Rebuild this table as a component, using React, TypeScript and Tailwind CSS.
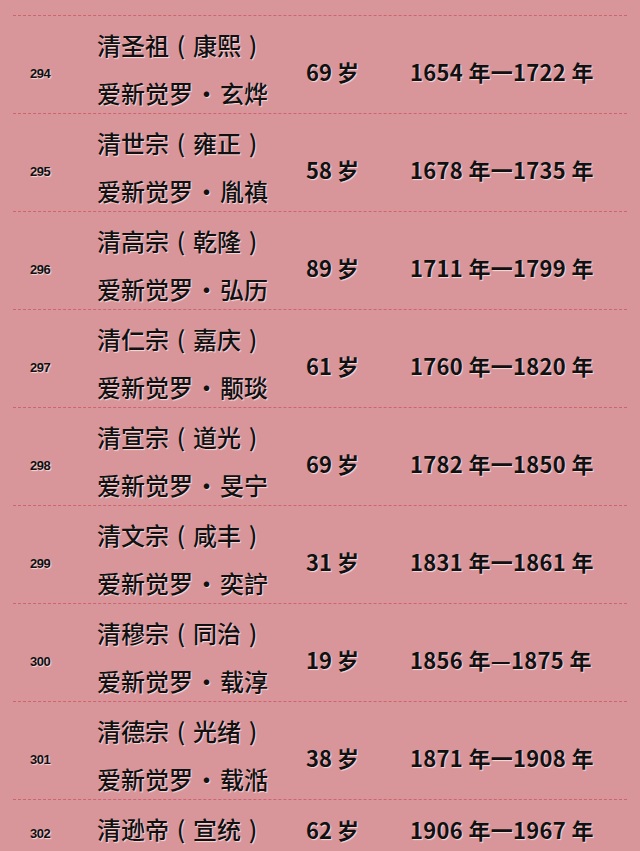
import React from "react";

const rows = [
  { no: "294", title: ["清圣祖", "康熙"], name: ["爱新觉罗", "玄烨"], age: "69 岁", years: "1654 年一1722 年" },
  { no: "295", title: ["清世宗", "雍正"], name: ["爱新觉罗", "胤禛"], age: "58 岁", years: "1678 年一1735 年" },
  { no: "296", title: ["清高宗", "乾隆"], name: ["爱新觉罗", "弘历"], age: "89 岁", years: "1711 年一1799 年" },
  { no: "297", title: ["清仁宗", "嘉庆"], name: ["爱新觉罗", "颙琰"], age: "61 岁", years: "1760 年一1820 年" },
  { no: "298", title: ["清宣宗", "道光"], name: ["爱新觉罗", "旻宁"], age: "69 岁", years: "1782 年一1850 年" },
  { no: "299", title: ["清文宗", "咸丰"], name: ["爱新觉罗", "奕詝"], age: "31 岁", years: "1831 年一1861 年" },
  { no: "300", title: ["清穆宗", "同治"], name: ["爱新觉罗", "载淳"], age: "19 岁", years: "1856 年—1875 年" },
  { no: "301", title: ["清德宗", "光绪"], name: ["爱新觉罗", "载湉"], age: "38 岁", years: "1871 年一1908 年" },
  // last row is cut off by the bottom edge, only its first line shows
  { no: "302", title: ["清逊帝", "宣统"], name: null, age: "62 岁", years: "1906 年一1967 年" },
];

const shadow = "[text-shadow:1px_1px_1px_rgba(255,236,236,0.8)]";

function Box({ children, w = "w-[24px]" }: { children: React.ReactNode; w?: string }) {
  return <span className={`inline-block ${w} text-center`}>{children}</span>;
}

export default function App() {
  return (
    <div
      className="w-[640px] h-[851px] overflow-hidden bg-[#d9969a] pt-[15px] text-[#111]"
      style={{ fontFamily: '"Noto Sans CJK SC", "Noto Sans", sans-serif' }}
    >
      {rows.map((r, i) => {
        const last = i === rows.length - 1;
        return (
          <div
            key={r.no}
            className="mx-[13px] h-[98px] border-t border-dashed border-[#cf6470] flex"
          >
            <div
              className={`w-[84px] pl-[17px] ${last ? "pt-[26px]" : "pt-[50px]"} text-[13px] leading-[16px] font-bold tracking-[-0.5px]`}
              style={{ fontFamily: '"Liberation Sans", Arial, sans-serif' }}
            >
              <span className={shadow}>{r.no}</span>
            </div>
            <div className={`w-[209px] pt-[5px] text-[24px] leading-[48px] font-medium whitespace-nowrap ${shadow}`}>
              <div>
                {r.title[0]}
                <Box>(</Box>
                {r.title[1]}
                <Box>)</Box>
              </div>
              {r.name && (
                <div>
                  {r.name[0]}
                  <Box w="w-[27px]">•</Box>
                  {r.name[1]}
                </div>
              )}
            </div>
            <div className={`w-[104px] ${last ? "pt-[12px]" : "pt-[38px]"} text-[22px] leading-[34px] font-semibold ${shadow}`}>
              {r.age}
            </div>
            <div className={`${last ? "pt-[12px]" : "pt-[38px]"} text-[22px] leading-[34px] font-semibold tracking-[0.3px] whitespace-nowrap ${shadow}`}>
              {r.years}
            </div>
          </div>
        );
      })}
    </div>
  );
}
